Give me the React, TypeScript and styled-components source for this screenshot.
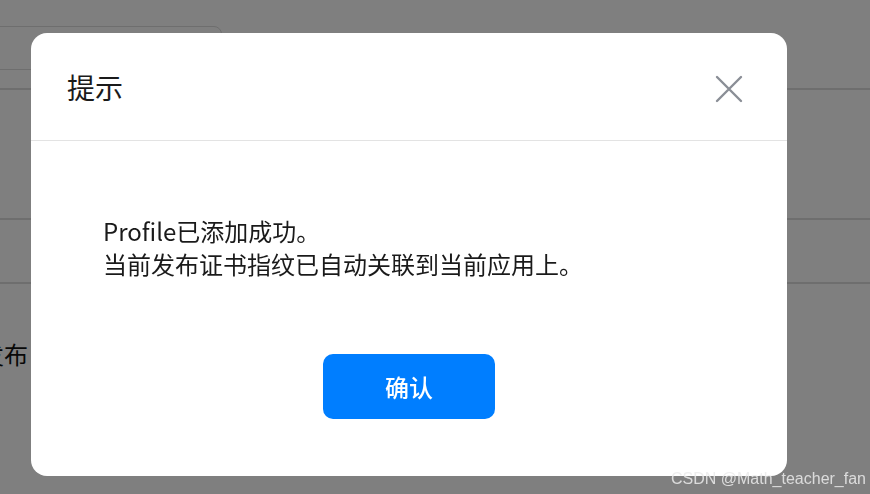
import React from "react";
import styled, { createGlobalStyle } from "styled-components";

const Global = createGlobalStyle`
  html, body { margin: 0; padding: 0; background: #fff; }
  body { width: 870px; height: 494px; overflow: hidden; font-family: "Noto Sans CJK SC", "Noto Sans", sans-serif; }
`;

const Page = styled.div`
  width: 870px;
  height: 494px;
  display: flex;
  flex-direction: column;
  overflow: hidden;
`;

const InputBox = styled.div`
  margin-top: 26px;
  margin-left: -10px;
  width: 232px;
  height: 44px;
  border: 1px solid #dcdcdc;
  border-radius: 8px;
  box-sizing: border-box;
`;

const Row = styled.div<{ $h: number }>`
  height: ${(p) => p.$h}px;
  border-bottom: 2px solid #dcdcdc;
  box-sizing: border-box;
`;

const BgText = styled.div`
  margin-top: 54px;
  margin-left: -20px;
  font-size: 24px;
  line-height: 32px;
  color: #111;
  white-space: nowrap;
`;

const Overlay = styled.div`
  position: fixed;
  inset: 0;
  background: rgba(0, 0, 0, 0.5);
  padding: 33px 0 0 31px;
  box-sizing: border-box;
`;

const Modal = styled.div`
  width: 756px;
  height: 443px;
  background: #fff;
  border-radius: 16px;
  display: flex;
  flex-direction: column;
`;

const Header = styled.div`
  height: 108px;
  display: flex;
  align-items: center;
  justify-content: space-between;
  padding: 0 42px 0 36px;
  border-bottom: 1px solid #e3e3e3;
  box-sizing: border-box;
`;

const Title = styled.div`
  font-size: 28px;
  color: #1a1a1a;
  line-height: 36px;
`;

const CloseBtn = styled.div`
  width: 32px;
  height: 32px;
  display: flex;
  align-items: center;
  justify-content: center;
  margin-top: 4px;
`;

const Body = styled.div`
  flex: 1;
  display: flex;
  flex-direction: column;
  padding: 73px 40px 57px 72px;
`;

const Message = styled.div`
  font-size: 24px;
  line-height: 33px;
  color: #1a1a1a;
  flex: 1;
`;

const Footer = styled.div`
  display: flex;
  justify-content: flex-start;
  padding-left: 220px;
`;

const ConfirmButton = styled.button`
  width: 172px;
  height: 65px;
  border: none;
  border-radius: 10px;
  background: #007eff;
  color: #fff;
  font-family: "Noto Sans CJK SC", sans-serif;
  font-size: 24px;
  font-weight: 500;
  cursor: pointer;
`;

const Watermark = styled.div`
  position: fixed;
  right: 4px;
  bottom: 6px;
  font-family: "Liberation Sans", Arial, sans-serif;
  font-size: 16px;
  color: rgba(235, 235, 235, 0.85);
`;

export default function App() {
  return (
    <>
      <Global />
      <Page>
        <InputBox />
        <Row $h={20} />
        <Row $h={130} />
        <Row $h={64} />
        <BgText>发布</BgText>
      </Page>
      <Overlay>
        <Modal>
          <Header>
            <Title>提示</Title>
            <CloseBtn>
              <svg width="28" height="28" viewBox="0 0 28 28">
                <path d="M2 2 L26 26 M26 2 L2 26" stroke="#8a8e96" strokeWidth="2.4" strokeLinecap="round" />
              </svg>
            </CloseBtn>
          </Header>
          <Body>
            <Message>
              Profile已添加成功。
              <br />
              当前发布证书指纹已自动关联到当前应用上。
            </Message>
            <Footer>
              <ConfirmButton>确认</ConfirmButton>
            </Footer>
          </Body>
        </Modal>
      </Overlay>
      <Watermark>CSDN @Math_teacher_fan</Watermark>
    </>
  );
}
